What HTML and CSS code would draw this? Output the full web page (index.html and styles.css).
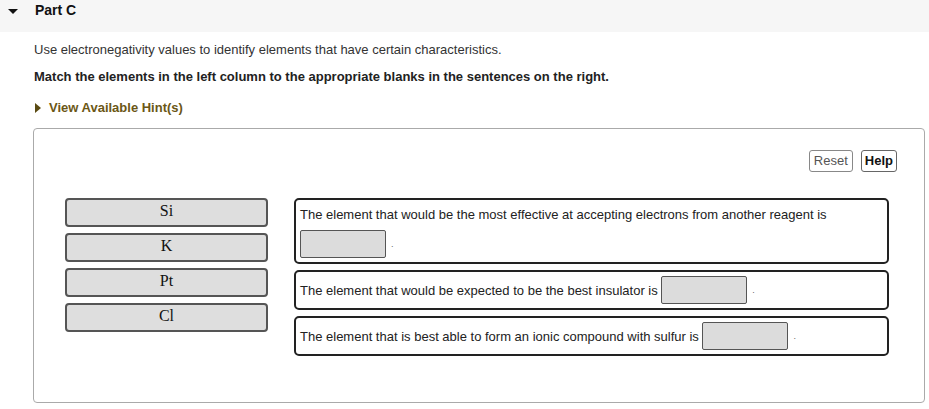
FILE: index.html
```html
<!DOCTYPE html>
<html>
<head>
<meta charset="utf-8">
<link rel="stylesheet" href="styles.css">
</head>
<body>
<div class="header">
  <span class="tri-down"></span>
  <span class="part">Part C</span>
</div>
<div class="content">
  <p class="intro">Use electronegativity values to identify elements that have certain characteristics.</p>
  <p class="instr">Match the elements in the left column to the appropriate blanks in the sentences on the right.</p>
  <div class="hint"><span class="tri-right"></span><span>View Available Hint(s)</span></div>
  <div class="panel">
    <div class="tools">
      <span class="btn">Reset</span>
      <span class="btn bold">Help</span>
    </div>
    <div class="match">
      <div class="items">
        <div class="item">Si</div>
        <div class="item">K</div>
        <div class="item">Pt</div>
        <div class="item">Cl</div>
      </div>
      <div class="sentences">
        <div class="sent tall">
          <div class="line">The element that would be the most effective at accepting electrons from another reagent is</div>
          <div class="line"><span class="blank"></span><span class="dot">.</span></div>
        </div>
        <div class="sent">
          <div class="line">The element that would be expected to be the best insulator is <span class="blank"></span><span class="dot">.</span></div>
        </div>
        <div class="sent">
          <div class="line">The element that is best able to form an ionic compound with sulfur is <span class="blank"></span><span class="dot">.</span></div>
        </div>
      </div>
    </div>
  </div>
</div>
</body>
</html>
```
FILE: styles.css
```css
html, body { margin: 0; padding: 0; background: #fff; }
body { font-family: "Liberation Sans", Arial, sans-serif; color: #222; }
.header {
  height: 32px;
  background: #f6f6f6;
  display: flex;
  align-items: flex-start;
  padding-top: 3px;
  box-sizing: border-box;
}
.tri-down {
  width: 0; height: 0;
  border-left: 5px solid transparent;
  border-right: 5px solid transparent;
  border-top: 5px solid #111;
  margin: 6px 0 0 8px;
}
.part { font-weight: bold; font-size: 14px; margin-left: 17px; color: #111; line-height: 15px; }
.content { padding-left: 33px; padding-right: 4px; }
.intro { margin: 10px 0 0 1px; font-size: 13px; color: #333; line-height: 15px; }
.instr { margin: 12px 0 0 1px; font-size: 13px; font-weight: bold; color: #222; line-height: 15px; }
.hint {
  display: flex; align-items: center;
  margin: 16px 0 0 2px;
  font-size: 13px; font-weight: bold; color: #6b5716;
  line-height: 15px;
}
.tri-right {
  width: 0; height: 0;
  border-top: 5px solid transparent;
  border-bottom: 5px solid transparent;
  border-left: 6px solid #5a4a12;
  margin-right: 8px;
}
.panel {
  margin-top: 13px;
  border: 1px solid #aaa;
  border-radius: 4px;
  height: 275px;
  box-sizing: border-box;
  padding: 21px 27px 0 31px;
}
.tools { display: flex; justify-content: flex-end; gap: 8px; }
.btn {
  border: 1px solid #888;
  border-radius: 3px;
  font-size: 13px;
  color: #555;
  padding: 0 4px;
  height: 20px;
  line-height: 20px;
}
.btn.bold { font-weight: bold; color: #111; border-color: #666; padding: 0 3px; }
.match { display: flex; gap: 26px; margin-top: 26px; margin-right: 8px; }
.items { width: 203px; display: flex; flex-direction: column; gap: 6px; }
.item {
  height: 29px;
  box-sizing: border-box;
  border: 2px solid #555;
  border-radius: 4px;
  background: #dedede;
  font-family: "Liberation Serif", "Times New Roman", serif;
  font-size: 16px;
  color: #111;
  text-align: center;
  line-height: 21px;
}
.sentences { flex: 1; display: flex; flex-direction: column; gap: 6px; }
.sent {
  border: 2px solid #222;
  border-radius: 5px;
  height: 40px;
  box-sizing: border-box;
  padding: 4px 4px 0 4px;
  font-size: 13px;
  color: #222;
}
.sent.tall { height: 66px; padding-top: 7px; }
.line { display: flex; align-items: center; height: 28px; white-space: pre; }
.sent.tall .line:first-child { height: 15px; margin-bottom: 8px; }
.blank {
  display: inline-block;
  width: 86px; height: 28px;
  box-sizing: border-box;
  border: 1px solid #555;
  border-radius: 2px;
  background: #dcdcdc;
  margin-left: 0;
}
.dot { margin-left: 5px; color: #666; font-size: 9px; }
```
